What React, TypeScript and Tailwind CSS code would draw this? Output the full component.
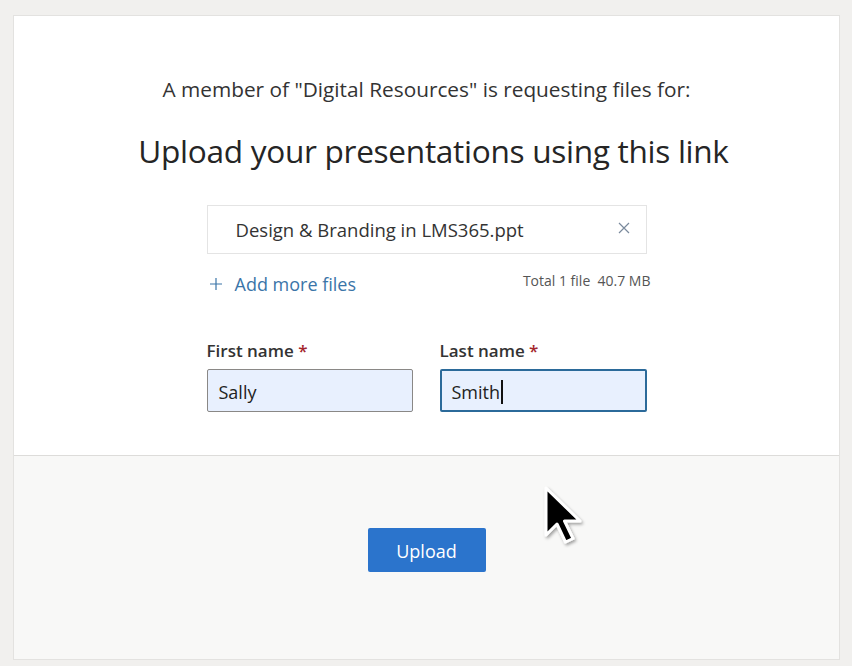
import React from "react";

export default function App() {
  return (
    <div className="w-[852px] h-[666px] bg-[#f1f0ee] pt-[15px] pl-[13px] overflow-hidden" style={{ fontFamily: '"Open Sans", "Noto Sans", sans-serif' }}>
      <div className="relative w-[827px] h-[645px] border border-[#e3e2e0] bg-white flex flex-col">
        <div className="h-[440px] flex flex-col items-center border-b border-[#dddcda]">
          <p className="mt-[60px] text-[20.8px] leading-[26px] text-[#333]">A member of "Digital Resources" is requesting files for:</p>
          <h1 className="mt-[29px] ml-[14px] text-[31.6px] leading-[40px] font-medium text-[#252525] tracking-[-0.3px]">Upload your presentations using this link</h1>
          <div className="mt-[34px] w-[440px] flex flex-col">
            <div className="h-[49px] border border-[#e4e4e4] flex items-center justify-between pl-[28px] pr-[16px]">
              <span className="text-[18.5px] text-[#333]">Design &amp; Branding in LMS365.ppt</span>
              <svg width="12" height="12" viewBox="0 0 12 12" className="mb-[4px]">
                <path d="M1 1 L11 11 M11 1 L1 11" stroke="#7a8a9c" strokeWidth="1.2" fill="none" />
              </svg>
            </div>
            <div className="mt-[16px] flex items-center justify-between">
              <div className="flex items-center text-[#3a75a8]">
                <svg width="12" height="12" viewBox="0 0 12 12" className="ml-[3px] mr-[13px]">
                  <path d="M6 0 V12 M0 6 H12" stroke="#3a75a8" strokeWidth="1.2" fill="none" />
                </svg>
                <span className="text-[18px] leading-[24px]">Add more files</span>
              </div>
              <span className="text-[14px] text-[#555] mr-[-4px] mb-[6px]">Total 1 file&nbsp; 40.7 MB</span>
            </div>
            <div className="mt-[43px] flex gap-[27px]">
              <div className="flex flex-col w-[206px]">
                <label className="text-[17px] leading-[22px] font-semibold text-[#333]">First name <span className="text-[#a4262c]">*</span></label>
                <div className="mt-[7px] h-[43px] pt-[3px] bg-[#e8f0fe] border border-[#8a8886] rounded-[2px] flex items-center px-[11px] text-[18px] text-[#222]">Sally</div>
              </div>
              <div className="flex flex-col w-[207px]">
                <label className="text-[17px] leading-[22px] font-semibold text-[#333]">Last name <span className="text-[#a4262c]">*</span></label>
                <div className="mt-[7px] h-[43px] pt-[3px] bg-[#e8f0fe] border-2 border-[#2b6a9a] rounded-[2px] flex items-center px-[10px] text-[18px] text-[#222]">
                  Smith<span className="inline-block w-[1.5px] h-[24px] bg-[#111] ml-[1px]"></span>
                </div>
              </div>
            </div>
          </div>
        </div>
        <div className="flex-1 bg-[#f8f8f7] flex flex-col items-center">
          <button className="mt-[72px] w-[118px] h-[44px] pt-[3px] bg-[#2b74cc] rounded-[2px] text-white text-[18px]">Upload</button>
        </div>
        <svg className="absolute left-[528px] top-[468px]" width="44" height="64" viewBox="0 0 44 64">
          <defs>
            <filter id="sh" x="-30%" y="-30%" width="160%" height="160%">
              <feDropShadow dx="1.5" dy="2" stdDeviation="1.5" floodColor="#000" floodOpacity="0.35" />
            </filter>
          </defs>
          <path d="M4 4 L4 51 L15 40 L23.5 58 L31 54.5 L22.5 37 L38 37 Z" fill="#000" stroke="#fff" strokeWidth="3" strokeLinejoin="round" filter="url(#sh)" />
        </svg>
      </div>
    </div>
  );
}
